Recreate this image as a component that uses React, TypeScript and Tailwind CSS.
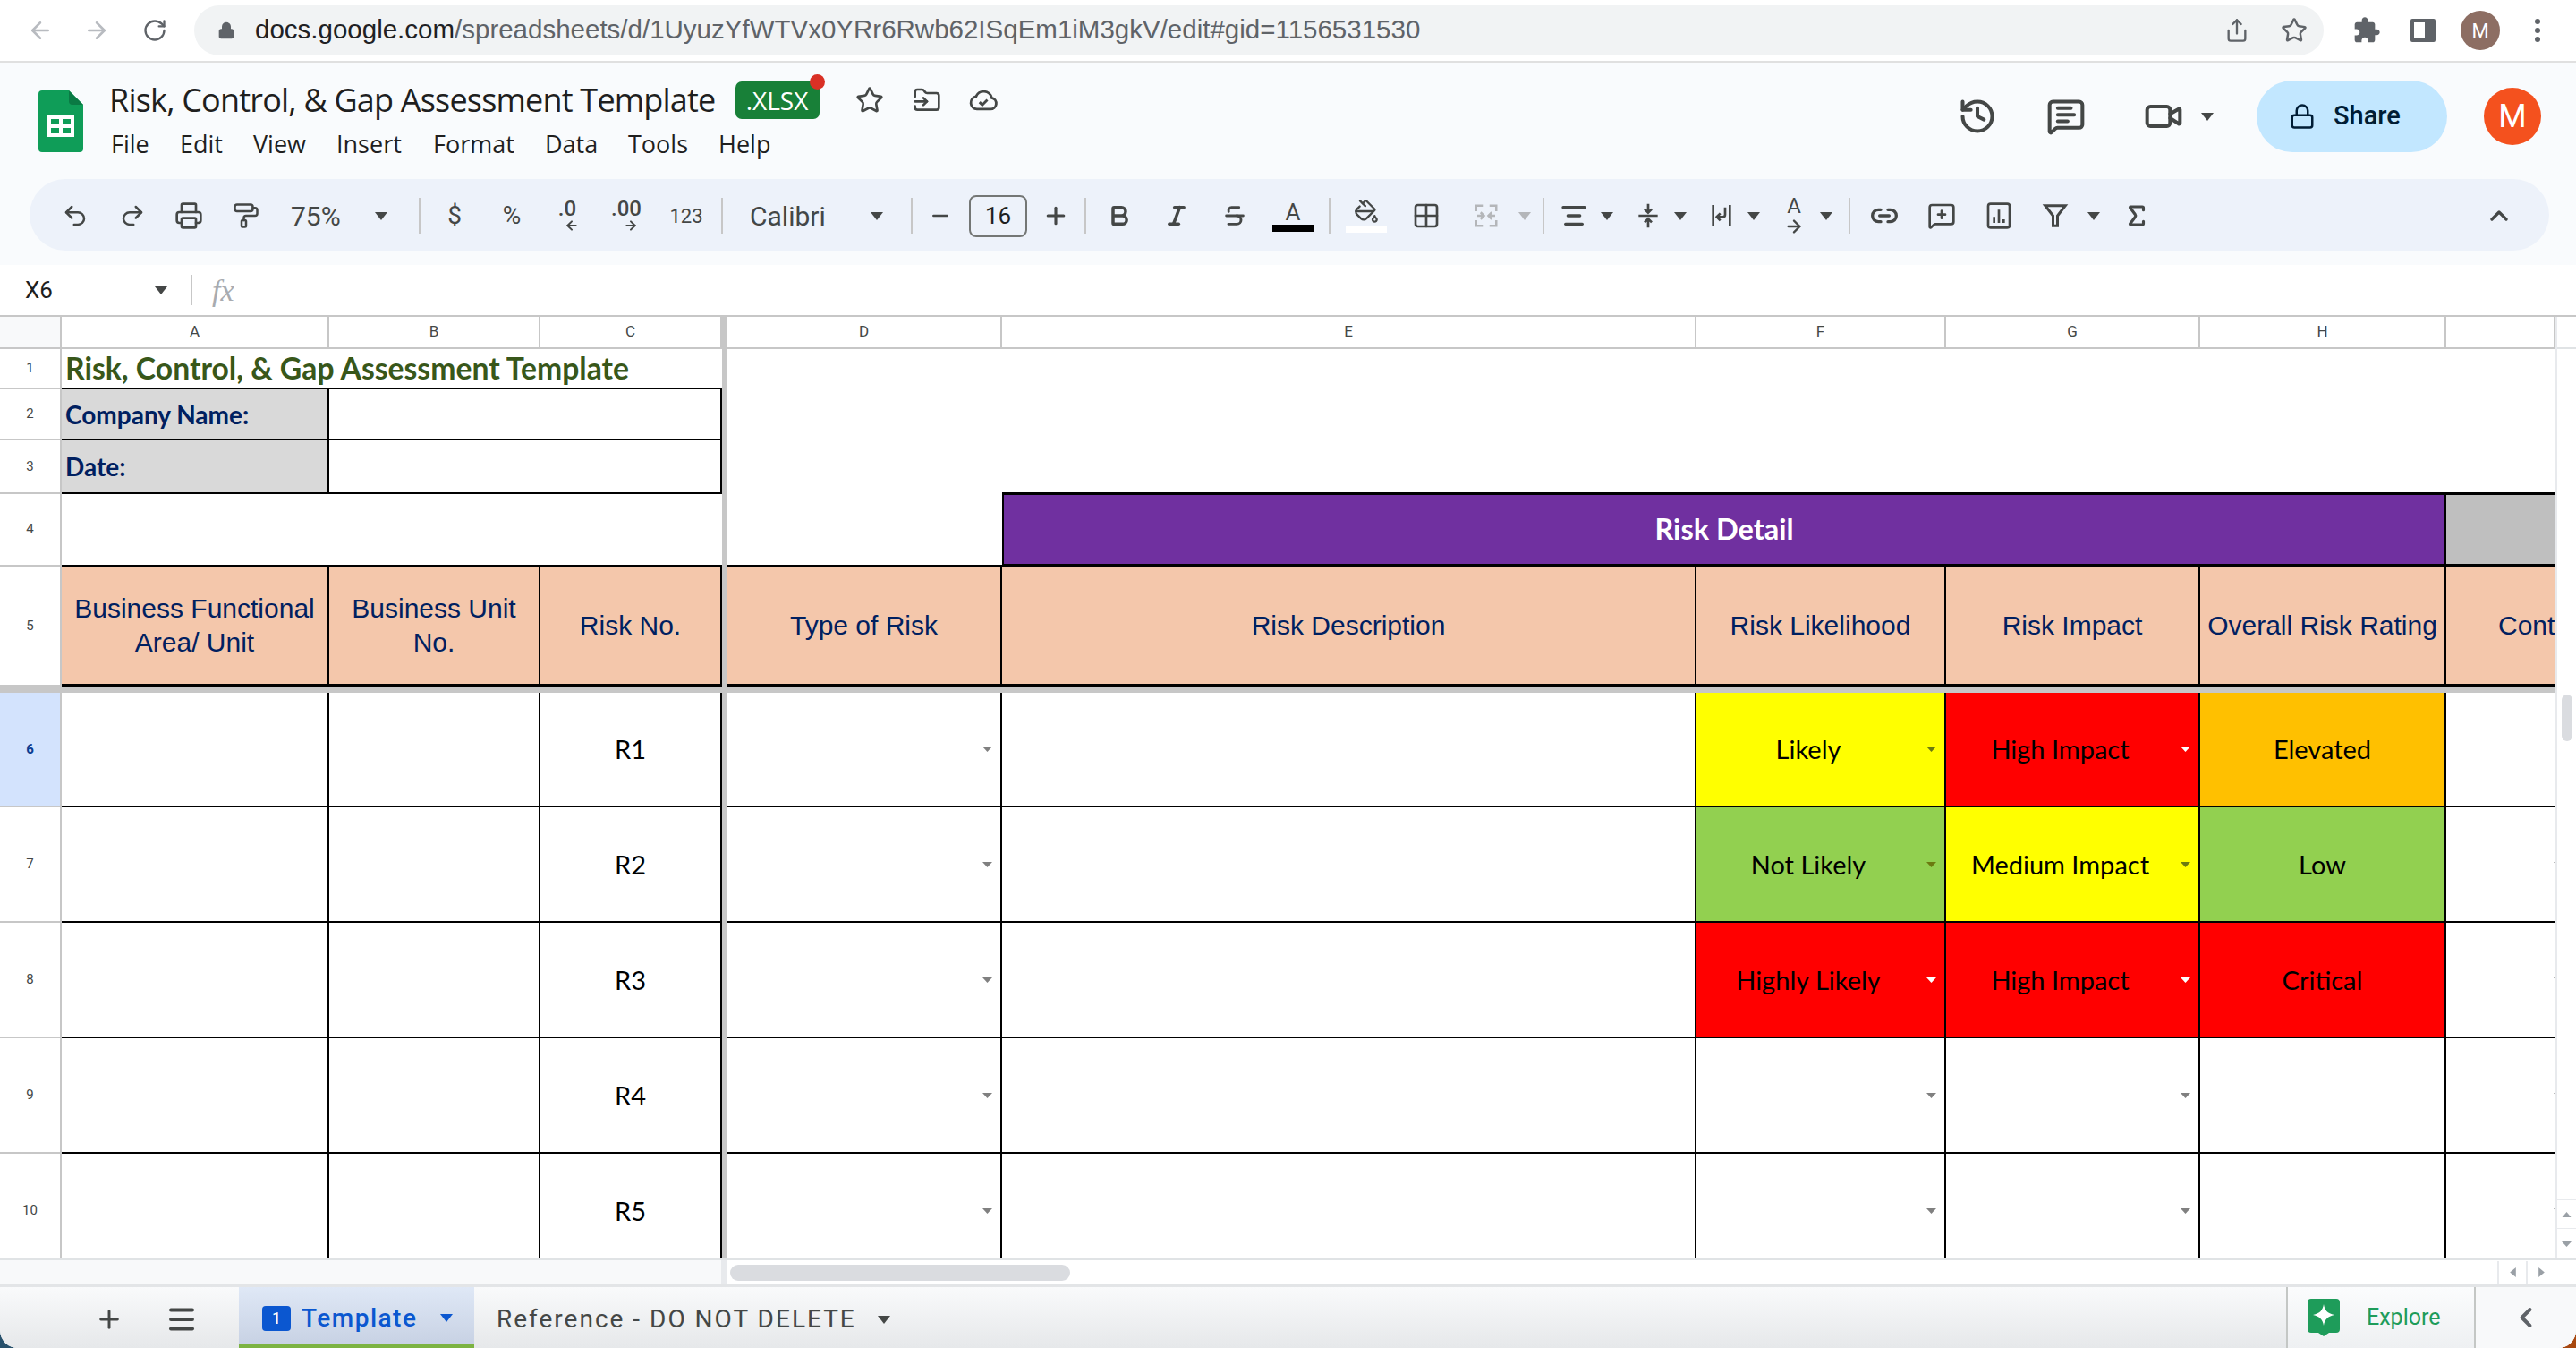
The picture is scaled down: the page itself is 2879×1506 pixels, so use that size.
import type { ReactNode } from 'react'
import {
  AlignCenter,
  ArrowLeft,
  ArrowRight,
  Bold,
  ChevronLeft,
  ChevronUp,
  FolderInput,
  Grid2x2,
  History,
  Italic,
  Link2,
  Lock,
  MessageSquarePlus,
  MessageSquareText,
  Minus,
  PaintBucket,
  PaintRoller,
  Plus,
  Printer,
  Redo2,
  RotateCw,
  Share,
  Sigma,
  Star,
  Strikethrough,
  Undo2,
  Video,
  Menu,
} from 'lucide-react'

const ICON = '#444746'

function Caret({ color = '#444746', size = 'w-[14px] h-[9px]' }: { color?: string; size?: string }) {
  return (
    <svg viewBox="0 0 10 6" className={size} preserveAspectRatio="none">
      <path d="M0 0h10L5 6z" fill={color} />
    </svg>
  )
}

function Tool({ w, children }: { w: string; children?: ReactNode }) {
  return <div className={`${w} h-full flex items-center justify-center shrink-0`}>{children}</div>
}

function Sep({ w }: { w: string }) {
  return (
    <div className={`${w} h-full flex items-center justify-center shrink-0`}>
      <div className="w-[2px] h-[40px] bg-[#c7c7c7]" />
    </div>
  )
}

function ChromeBar() {
  return (
    <div className="h-[70px] shrink-0 bg-white border-b-2 border-[#e0e0e0] flex items-center">
      <div className="w-[217px] flex items-center shrink-0 pl-[30px] text-[#b8bbc0]">
        <ArrowLeft size={30} />
        <ArrowRight size={30} className="ml-[33px]" />
        <RotateCw size={28} className="ml-[36px] text-[#5f6368]" />
      </div>
      <div className="w-[2380px] h-[56px] rounded-full bg-[#f1f3f4] flex items-center pl-[26px] pr-[16px] shrink-0">
        <Lock size={20} fill="#5f6368" className="text-[#5f6368]" />
        <span className="ml-[22px] text-[29.5px] text-[#5f6368] font-['Liberation_Sans',sans-serif] whitespace-nowrap -mt-[2px]">
          <span className="text-[#202124]">docs.google.com</span>/spreadsheets/d/1UyuzYfWTVx0YRr6Rwb62ISqEm1iM3gkV/edit#gid=1156531530
        </span>
        <Share size={28} className="ml-auto text-[#5f6368]" />
        <Star size={30} className="ml-[35px] mr-[2px] text-[#5f6368]" />
      </div>
      <svg viewBox="0 0 24 24" className="w-[32px] h-[32px] ml-[32px]">
        <path
          fill="#5f6368"
          d="M20.5 11H19V7c0-1.1-.9-2-2-2h-4V3.5C13 2.12 11.88 1 10.5 1S8 2.12 8 3.5V5H4c-1.1 0-1.99.9-1.99 2v3.8H3.5c1.49 0 2.7 1.21 2.7 2.7s-1.21 2.7-2.7 2.7H2V20c0 1.1.9 2 2 2h3.8v-1.5c0-1.49 1.21-2.7 2.7-2.7 1.49 0 2.7 1.21 2.7 2.7V22H17c1.1 0 2-.9 2-2v-4h1.5c1.38 0 2.5-1.12 2.5-2.5S21.88 11 20.5 11z"
        />
      </svg>
      <div className="w-[28px] h-[26px] border-[4px] border-[#5f6368] border-r-[12px] ml-[33px] rounded-[2px]" />
      <div className="w-[44px] h-[44px] rounded-full bg-[#8d6e63] ml-[28px] text-white text-[22px] flex items-center justify-center font-['Roboto',sans-serif]">
        M
      </div>
      <div className="ml-[39px] flex flex-col gap-[4px]">
        <div className="w-[6px] h-[6px] rounded-full bg-[#5f6368]" />
        <div className="w-[6px] h-[6px] rounded-full bg-[#5f6368]" />
        <div className="w-[6px] h-[6px] rounded-full bg-[#5f6368]" />
      </div>
    </div>
  )
}

function DocHeader() {
  const menus: [string, string][] = [
    ['File', 'w-[77px]'],
    ['Edit', 'w-[82px]'],
    ['View', 'w-[93px]'],
    ['Insert', 'w-[108px]'],
    ['Format', 'w-[125px]'],
    ['Data', 'w-[93px]'],
    ['Tools', 'w-[101px]'],
    ['Help', 'w-[80px]'],
  ]
  return (
    <div className="h-[130px] shrink-0 flex font-['Open_Sans',sans-serif]">
      <div className="w-[122px] shrink-0 pl-[43px] pt-[31px]">
        <svg viewBox="0 0 50 69" className="w-[50px] h-[69px]">
          <path d="M4 0h30l16 16v49a4 4 0 0 1-4 4H4a4 4 0 0 1-4-4V4a4 4 0 0 1 4-4z" fill="#0f9d58" />
          <path d="M34 0l16 16v0H38a4 4 0 0 1-4-4z" fill="#0a7a44" />
          <path d="M10 28h30v24H10z" fill="#fff" />
          <path d="M14 32h9v6h-9zM27 32h9v6h-9zM14 42h9v6h-9zM27 42h9v6h-9z" fill="#0f9d58" />
        </svg>
      </div>
      <div className="flex flex-col">
        <div className="h-[62px] mt-[11px] flex items-center">
          <span className="text-[36px] tracking-[-0.8px] text-[#1f1f1f] whitespace-nowrap">
            Risk, Control, &amp; Gap Assessment Template
          </span>
          <div className="ml-[22px] relative w-[94px] h-[42px] rounded-[7px] bg-[#188038] text-white text-[28px] flex items-center justify-center">
            .XLSX
            <div className="absolute -top-[8px] -right-[6px] w-[17px] h-[17px] rounded-full bg-[#d93025]" />
          </div>
          <Star size={32} strokeWidth={2} className="ml-[40px] text-[#444746]" />
          <FolderInput size={32} className="ml-[32px] text-[#444746]" />
          <svg viewBox="0 0 24 24" fill="none" stroke={ICON} strokeWidth="2" className="w-[34px] h-[34px] ml-[30px]">
            <path d="M17.5 19H7a5 5 0 0 1-.8-9.9A6.5 6.5 0 0 1 18.6 10.1 4.5 4.5 0 0 1 17.5 19z" />
            <path d="M9 13.5l2.2 2.2 4-4" />
          </svg>
        </div>
        <div className="flex h-[36px] items-center">
          {menus.map(([m, w]) => (
            <span key={m} className={`${w} text-[27px] text-[#1f1f1f] pl-[2px] whitespace-nowrap`}>
              {m}
            </span>
          ))}
        </div>
      </div>
      <div className="ml-auto flex items-start pt-[20px] pr-[39px]">
        <div className="h-[80px] flex items-center">
          <History size={44} className="text-[#444746]" strokeWidth={2.2} />
          <MessageSquareText size={44} className="ml-[55px] text-[#444746]" strokeWidth={2.2} />
          <Video size={44} className="ml-[65px] text-[#444746]" strokeWidth={2.2} />
          <div className="ml-[20px]">
            <Caret />
          </div>
          <div className="ml-[48px] w-[213px] h-[80px] rounded-full bg-[#c2e7ff] flex items-center pl-[36px]">
            <Lock size={30} className="text-[#001d35]" />
            <span className="ml-[20px] text-[29px] font-medium text-[#001d35] font-['Roboto',sans-serif]">Share</span>
          </div>
          <div className="ml-[41px] w-[64px] h-[64px] rounded-full bg-[#f4511e] text-white text-[36px] flex items-center justify-center font-['Roboto',sans-serif]">
            M
          </div>
        </div>
      </div>
    </div>
  )
}

function Toolbar() {
  const ic = 'text-[#444746]'
  return (
    <div className="h-[96px] shrink-0 px-[30px] pr-[30px] flex items-start font-['Roboto',sans-serif] text-[#444746]">
      <div className="ml-[3px] w-[2816px] h-[80px] rounded-[40px] bg-[#edf2fa] flex items-center pl-[19px] pt-[2px]">
        <Tool w="w-[64px]"><Undo2 size={30} className={ic} /></Tool>
        <Tool w="w-[63px]"><Redo2 size={30} className={ic} /></Tool>
        <Tool w="w-[64px]"><Printer size={32} className={ic} /></Tool>
        <Tool w="w-[64px]"><PaintRoller size={30} className={ic} /></Tool>
        <div className="w-[144px] h-full flex items-center pl-[18px] shrink-0">
          <span className="text-[30px]">75%</span>
          <div className="ml-[38px]"><Caret /></div>
        </div>
        <Sep w="w-[36px]" />
        <Tool w="w-[42px]"><span className="text-[28px]">$</span></Tool>
        <Tool w="w-[86px]"><span className="text-[28px]">%</span></Tool>
        <Tool w="w-[38px]">
          <div className="flex flex-col items-center leading-none">
            <span className="text-[24px] font-medium leading-[22px]">.0</span>
            <ArrowLeft size={16} strokeWidth={3} className="ml-[10px]" />
          </div>
        </Tool>
        <Tool w="w-[94px]">
          <div className="flex flex-col items-center leading-none">
            <span className="text-[24px] font-medium leading-[22px]">.00</span>
            <ArrowRight size={16} strokeWidth={3} className="ml-[10px]" />
          </div>
        </Tool>
        <Tool w="w-[40px]"><span className="text-[22px]">123</span></Tool>
        <Sep w="w-[40px]" />
        <div className="w-[174px] h-full flex items-center pl-[11px] shrink-0">
          <span className="text-[30px] w-[135px]">Calibri</span>
          <Caret />
        </div>
        <Sep w="w-[36px]" />
        <Tool w="w-[28px]"><Minus size={26} strokeWidth={2.5} className={ic} /></Tool>
        <div className="ml-[18px] w-[65px] h-[47px] rounded-[8px] border-2 border-[#747775] flex items-center justify-center text-[26px] text-[#1f1f1f] shrink-0">
          16
        </div>
        <Tool w="w-[64px]"><Plus size={30} strokeWidth={2.5} className={ic} /></Tool>
        <Sep w="w-[2px]" />
        <Tool w="w-[74px]"><Bold size={28} strokeWidth={3} className={ic} /></Tool>
        <Tool w="w-[54px]"><Italic size={28} strokeWidth={3} className={ic} /></Tool>
        <Tool w="w-[76px]"><Strikethrough size={28} strokeWidth={2.5} className={ic} /></Tool>
        <Tool w="w-[54px]">
          <div className="flex flex-col items-center">
            <span className="text-[26px] leading-[26px]">A</span>
            <div className="w-[46px] h-[8px] bg-black mt-[1px] border-y-2 border-black" />
          </div>
        </Tool>
        <Sep w="w-[28px]" />
        <Tool w="w-[54px]">
          <div className="flex flex-col items-center">
            <PaintBucket size={28} className={ic} />
            <div className="w-[46px] h-[8px] bg-white mt-[2px]" />
          </div>
        </Tool>
        <Tool w="w-[80px]"><Grid2x2 size={32} className={ic} /></Tool>
        <Tool w="w-[54px]">
          <svg viewBox="0 0 24 24" fill="none" stroke="#b4b6b9" strokeWidth="2" className="w-[30px] h-[30px]">
            <path d="M3 8V3h6M15 3h6v5M3 16v5h6M15 21h6v-5M4 12h6M7 9l3 3-3 3M20 12h-6M17 9l-3 3 3 3" />
          </svg>
        </Tool>
        <Tool w="w-[32px]"><Caret color="#b4b6b9" /></Tool>
        <Sep w="w-[10px]" />
        <Tool w="w-[58px]"><AlignCenter size={32} strokeWidth={2.5} className={ic} /></Tool>
        <Tool w="w-[16px]"><Caret /></Tool>
        <Tool w="w-[66px]">
          <svg viewBox="0 0 24 24" fill="none" stroke={ICON} strokeWidth="2" className="w-[32px] h-[32px] ml-[9px]">
            <path d="M4 12h16M12 2v7M9 6.500l3 3 3-3M12 22v-7M9 17.500l3-3 3 3" />
          </svg>
        </Tool>
        <Tool w="w-[16px]"><Caret /></Tool>
        <Tool w="w-[66px]">
          <svg viewBox="0 0 24 24" fill="none" stroke={ICON} strokeWidth="2" className="w-[32px] h-[32px] ml-[9px]">
            <path d="M5 3v18M19 3v18M15 5v6a2 2 0 0 1-2 2H9M11 10l-3 3 3 3" />
          </svg>
        </Tool>
        <Tool w="w-[16px]"><Caret /></Tool>
        <Tool w="w-[65px]">
          <div className="flex flex-col items-center leading-none ml-[9px]">
            <span className="text-[24px] leading-[24px]">A</span>
            <ArrowRight size={22} strokeWidth={2.5} className={ic} />
          </div>
        </Tool>
        <Tool w="w-[16px]"><Caret /></Tool>
        <Sep w="w-[36px]" />
        <Tool w="w-[42px]"><Link2 size={32} strokeWidth={2.5} className={ic} /></Tool>
        <Tool w="w-[86px]"><MessageSquarePlus size={32} className={ic} /></Tool>
        <Tool w="w-[42px]">
          <svg viewBox="0 0 24 24" fill="none" stroke={ICON} strokeWidth="2" className="w-[32px] h-[32px]">
            <rect x="3" y="2" width="18" height="20" rx="2" />
            <path d="M8 18v-5M12 18V7M16 18v-3" />
          </svg>
        </Tool>
        <Tool w="w-[77px]">
          <svg viewBox="0 0 24 24" fill="none" stroke={ICON} strokeWidth="2.4" className="w-[30px] h-[30px] ml-[6px]">
            <path d="M3 3h18l-7 9v9h-4v-9z" />
          </svg>
        </Tool>
        <Tool w="w-[16px]"><Caret /></Tool>
        <Tool w="w-[80px]"><Sigma size={30} strokeWidth={2.5} className={ic} /></Tool>
        <ChevronUp size={32} strokeWidth={2.5} className="ml-auto mr-[40px] text-[#444746]" />
      </div>
    </div>
  )
}

function FormulaBar() {
  return (
    <div className="h-[58px] shrink-0 bg-white flex items-center font-['Roboto',sans-serif] border-b-2 border-[#c7c7c7]">
      <span className="ml-[28px] w-[145px] text-[26px] text-[#1f1f1f]">X6</span>
      <Caret />
      <div className="ml-[26px] w-[2px] h-[34px] bg-[#c7c7c7]" />
      <span className="ml-[22px] text-[34px] italic text-[#a8abb0] font-['Liberation_Serif',serif]">fx</span>
    </div>
  )
}

function ColHead({ label, cls }: { label?: string; cls?: string }) {
  return (
    <div className={`bg-white border-r-2 border-b-2 border-[#c7c7c7] flex items-center justify-center text-[17px] text-[#444746] font-['Roboto',sans-serif] ${cls ?? ''}`}>
      {label}
    </div>
  )
}

function RowNum({ n, active }: { n: number; active?: boolean }) {
  return (
    <div
      className={`border-r-2 border-b-2 border-[#c7c7c7] flex items-center justify-center text-[15px] font-['Roboto',sans-serif] ${
        active ? 'bg-[#d3e3fd] text-[#0b3d91] font-bold' : 'bg-white text-[#444746]'
      }`}
    >
      {n}
    </div>
  )
}

function HeadCell({ children, cls }: { children: ReactNode; cls?: string }) {
  return (
    <div className={`bg-[#f4c7ab] border-r-2 border-b-[3px] border-black flex items-center justify-center text-center px-[4px] text-[30px] leading-[38px] text-[#002060] font-['Liberation_Sans',sans-serif] ${cls ?? ''}`}>
      {children}
    </div>
  )
}

function Blank({ cls }: { cls?: string }) {
  return <div className={`bg-white border-r-2 border-b-2 border-black ${cls ?? ''}`} />
}

function Drop({ text, bg, arrow }: { text?: string; bg: string; arrow: string }) {
  return (
    <div className={`${bg} border-r-2 border-b-2 border-black flex items-center text-[29px] text-black font-['Lato',sans-serif]`}>
      <span className="flex-1 text-center whitespace-nowrap">{text}</span>
      <div className="w-[27px] shrink-0 pl-[7px]">
        <Caret color={arrow} size="w-[11px] h-[6px]" />
      </div>
    </div>
  )
}

function Plain({ text, bg }: { text?: string; bg: string }) {
  return (
    <div className={`${bg} border-r-2 border-b-2 border-black flex items-center justify-center text-[29px] text-black font-['Lato',sans-serif]`}>
      {text}
    </div>
  )
}

const RISKS = [
  { n: 6, id: 'R1', f: 'Likely', fBg: 'bg-[#ffff00]', g: 'High Impact', gBg: 'bg-[#ff0000]', h: 'Elevated', hBg: 'bg-[#ffc000]' },
  { n: 7, id: 'R2', f: 'Not Likely', fBg: 'bg-[#92d050]', g: 'Medium Impact', gBg: 'bg-[#ffff00]', h: 'Low', hBg: 'bg-[#92d050]' },
  { n: 8, id: 'R3', f: 'Highly Likely', fBg: 'bg-[#ff0000]', g: 'High Impact', gBg: 'bg-[#ff0000]', h: 'Critical', hBg: 'bg-[#ff0000]' },
  { n: 9, id: 'R4', f: '', fBg: 'bg-white', g: '', gBg: 'bg-white', h: '', hBg: 'bg-white' },
  { n: 10, id: 'R5', f: '', fBg: 'bg-white', g: '', gBg: 'bg-white', h: '', hBg: 'bg-white' },
]

function arrowFor(bg: string) {
  if (bg === 'bg-[#ff0000]') return '#ffffff'
  if (bg === 'bg-white') return '#808080'
  return '#6b7a10'
}

function Sheet() {
  return (
    <div className="flex-1 min-w-0 overflow-hidden bg-white">
      <div className="grid grid-cols-[69px_299px_236px_203px_6px_307px_776px_279px_284px_275px_122px] grid-rows-[36px_45px_57px_60px_81px_134px_7px_128px_129px_129px_129px_129px]">
        <div className="bg-[#f8f9fa] border-r-2 border-b-2 border-[#c7c7c7]" />
        <ColHead label="A" />
        <ColHead label="B" />
        <ColHead label="C" />
        <div className="row-span-12 bg-[#c7c7c7]" />
        <ColHead label="D" />
        <ColHead label="E" />
        <ColHead label="F" />
        <ColHead label="G" />
        <ColHead label="H" />
        <ColHead />

        <RowNum n={1} />
        <div className="col-span-3 bg-white border-b-2 border-black flex items-center pl-[4px] text-[33.7px] font-bold text-[#38571a] font-['Lato',sans-serif] whitespace-nowrap">
          Risk, Control, &amp; Gap Assessment Template
        </div>
        <div className="col-span-6 row-span-3 bg-white" />

        <RowNum n={2} />
        <div className="bg-[#d9d9d9] border-r-2 border-b-2 border-black flex items-center pl-[4px] text-[28px] font-bold text-[#002060] font-['Lato',sans-serif]">
          Company Name:
        </div>
        <Blank cls="col-span-2" />

        <RowNum n={3} />
        <div className="bg-[#d9d9d9] border-r-2 border-b-2 border-black flex items-center pl-[4px] text-[28px] font-bold text-[#002060] font-['Lato',sans-serif]">
          Date:
        </div>
        <Blank cls="col-span-2" />

        <RowNum n={4} />
        <div className="col-span-3 bg-white border-b-2 border-black" />
        <div className="bg-white border-b-2 border-black" />
        <div className="col-span-4 -mt-[2px] bg-[#7030a0] border-l-2 border-y-[3px] border-r-2 border-black flex items-center justify-center text-[32.5px] font-bold text-white font-['Lato',sans-serif]">
          Risk Detail
        </div>
        <div className="-mt-[2px] bg-[#bfbfbf] border-y-[3px] border-black" />

        <RowNum n={5} />
        <HeadCell>
          Business Functional
          <br />
          Area/ Unit
        </HeadCell>
        <HeadCell>
          Business Unit
          <br />
          No.
        </HeadCell>
        <HeadCell>Risk No.</HeadCell>
        <HeadCell>Type of Risk</HeadCell>
        <HeadCell>Risk Description</HeadCell>
        <HeadCell>Risk Likelihood</HeadCell>
        <HeadCell>Risk Impact</HeadCell>
        <HeadCell cls="whitespace-nowrap !px-0">Overall Risk Rating</HeadCell>
        <HeadCell cls="!justify-start !pl-[58px] whitespace-nowrap overflow-hidden !border-r-0">Control</HeadCell>

        <div className="col-span-4 bg-[#c7c7c7]" />
        <div className="col-span-6 bg-[#c7c7c7]" />

        {RISKS.map((r) => (
          <div key={r.n} className="contents">
            <RowNum n={r.n} active={r.n === 6} />
            <Blank />
            <Blank />
            <div className="bg-white border-r-2 border-b-2 border-black flex items-center justify-center text-[29px] text-black font-['Lato',sans-serif]">
              {r.id}
            </div>
            <Drop bg="bg-white" arrow="#808080" />
            <Plain bg="bg-white" />
            <Drop text={r.f} bg={r.fBg} arrow={arrowFor(r.fBg)} />
            <Drop text={r.g} bg={r.gBg} arrow={arrowFor(r.gBg)} />
            <Plain text={r.h} bg={r.hBg} />
            <div className="bg-white border-b-2 border-black flex items-center justify-end overflow-hidden">
              <div className="-mr-[9px]">
                <Caret color="#808080" size="w-[11px] h-[6px]" />
              </div>
            </div>
          </div>
        ))}
      </div>
    </div>
  )
}

function VScroll() {
  return (
    <div className="w-[23px] shrink-0 bg-white border-l-2 border-[#e8eaed] flex flex-col items-center">
      <div className="w-full h-[36px] shrink-0 bg-white border-b-2 border-[#e0e3e5]" />
      <div className="w-[12px] h-[52px] mt-[386px] rounded-full bg-[#dadce0] shrink-0" />
      <div className="mt-auto w-full h-[33px] flex items-center justify-center border-b border-t border-[#e8eaed]">
        <svg viewBox="0 0 10 6" className="w-[11px] h-[6px]"><path d="M0 6h10L5 0z" fill="#9aa0a6" /></svg>
      </div>
      <div className="w-full h-[33px] flex items-center justify-center">
        <Caret color="#9aa0a6" size="w-[11px] h-[6px]" />
      </div>
    </div>
  )
}

function HScroll() {
  return (
    <div className="h-[29px] shrink-0 bg-white border-t-2 border-[#e0e3e5] flex items-stretch">
      <div className="w-[806px] bg-[#f8f9fa] border-r-[6px] border-[#e8eaed] shrink-0 box-content" />
      <div className="flex-1 flex items-center">
        <div className="ml-[4px] w-[380px] h-[18px] rounded-full bg-[#dadce0]" />
        <div className="ml-auto flex h-[25px] mr-[23px] border-l-2 border-[#e8eaed]">
          <div className="w-[32px] flex items-center justify-center border-r-2 border-[#e8eaed]">
            <svg viewBox="0 0 6 10" className="w-[7px] h-[11px]"><path d="M6 0v10L0 5z" fill="#9aa0a6" /></svg>
          </div>
          <div className="w-[31px] flex items-center justify-center">
            <svg viewBox="0 0 6 10" className="w-[7px] h-[11px]"><path d="M0 0v10l6-5z" fill="#9aa0a6" /></svg>
          </div>
        </div>
      </div>
    </div>
  )
}

function Tabs() {
  return (
    <div className="flex-1 min-h-0 flex border-t-[3px] border-[#e3e5e7] bg-gradient-to-b from-[#f9fafb] to-[#e6e8ea] font-['Roboto',sans-serif]">
      <div className="w-[267px] shrink-0 flex items-center pt-[4px]">
        <Plus size={32} strokeWidth={2.2} className="ml-[106px] text-[#444746]" />
        <Menu size={36} strokeWidth={2.6} className="ml-[47px] text-[#444746]" />
      </div>
      <div className="w-[263px] shrink-0 bg-gradient-to-b from-[#dfe8f6] to-[#c8d2e4] border-b-[5px] border-[#7cb342] flex items-center pl-[26px] pt-[6px]">
        <div className="w-[32px] h-[28px] rounded-[4px] bg-[#0b57d0] text-white text-[18px] flex items-center justify-center shrink-0">
          1
        </div>
        <span className="ml-[12px] text-[28px] font-medium tracking-[1.500px] text-[#0b57d0]">Template</span>
        <div className="ml-[26px]">
          <Caret color="#0b57d0" />
        </div>
      </div>
      <div className="flex items-center pl-[25px] pt-[4px]">
        <span className="text-[28px] tracking-[2px] text-[#444746] whitespace-nowrap">Reference - DO NOT DELETE</span>
        <div className="ml-[24px]">
          <Caret />
        </div>
      </div>
      <div className="ml-auto w-[212px] border-x-2 border-[#c4c7c5] flex items-center pl-[22px] bg-gradient-to-b from-[#fbfcfd] to-[#eef0f2]">
        <svg viewBox="0 0 36 42" className="w-[36px] h-[42px] shrink-0">
          <path d="M4 0h28a4 4 0 0 1 4 4v30a4 4 0 0 1-4 4h-8l-6 4-6-4H4a4 4 0 0 1-4-4V4a4 4 0 0 1 4-4z" fill="#1e9c5a" />
          <path d="M18 6c1.2 7 4 10 12 12-8 2-10.800 5-12 12-1.200-7-4-10-12-12 8-2 10.800-5 12-12z" fill="#fff" />
        </svg>
        <span className="ml-[30px] text-[25px] text-[#1e9c5a]">Explore</span>
      </div>
      <div className="w-[112px] shrink-0 flex items-center pl-[38px] bg-[#f8f9fa]">
        <ChevronLeft size={36} strokeWidth={2.6} className="text-[#5f6368]" />
      </div>
    </div>
  )
}

export default function App() {
  return (
    <div className="w-screen h-screen overflow-hidden bg-gradient-to-r from-[#27506b] to-[#a8480f]">
      <div className="w-full h-full flex flex-col bg-[#f9fbfd] rounded-b-[20px] overflow-hidden">
        <ChromeBar />
        <DocHeader />
        <Toolbar />
        <FormulaBar />
        <div className="h-[1052px] shrink-0 flex overflow-hidden">
          <Sheet />
          <VScroll />
        </div>
        <HScroll />
        <Tabs />
      </div>
    </div>
  )
}
